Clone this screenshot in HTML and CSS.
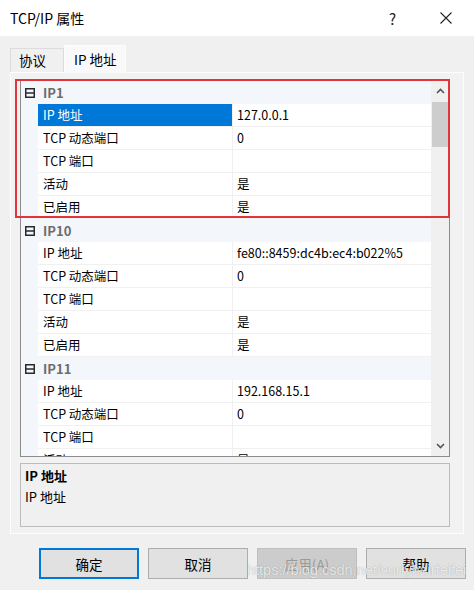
FILE: index.html
```html
<!DOCTYPE html>
<html lang="zh-CN">
<head>
    <meta charset="UTF-8">
    <meta name="viewport" content="width=device-width, initial-scale=1.0">
    <title>TCP/IP 属性</title>
    <link rel="stylesheet" href="styles.css">
</head>
<body>
    <div class="dialog">
        <div class="titlebar">
            <span class="title">TCP/IP 属性</span>
            <div class="title-controls">
                <span class="title-btn help">?</span>
                <span class="title-btn close">
                    <svg width="14" height="14" viewBox="0 0 14 14"><path d="M1.5 1.5 L12.5 12.5 M12.5 1.5 L1.5 12.5" stroke="#222" stroke-width="1.1" fill="none"/></svg>
                </span>
            </div>
        </div>

        <div class="tabs">
            <div class="tab">协议</div>
            <div class="tab active">IP 地址</div>
        </div>

        <div class="tab-panel">
            <div class="grid">
                <div class="grid-body">
                    <div class="row cat">
                        <div class="gutter"><svg class="minus" width="10" height="10" viewBox="0 0 10 10"><rect x="0.75" y="0.75" width="8.5" height="8.5" fill="none" stroke="#2b2b2b" stroke-width="1.5"/><path d="M1 5 H9" stroke="#2b2b2b" stroke-width="1.5"/></svg></div>
                        <div class="label">IP1</div>
                    </div>
                    <div class="row prop"><div class="gutter"></div><div class="name selected">IP 地址</div><div class="value">127.0.0.1</div></div>
                    <div class="row prop"><div class="gutter"></div><div class="name">TCP 动态端口</div><div class="value">0</div></div>
                    <div class="row prop"><div class="gutter"></div><div class="name">TCP 端口</div><div class="value"></div></div>
                    <div class="row prop"><div class="gutter"></div><div class="name">活动</div><div class="value">是</div></div>
                    <div class="row prop"><div class="gutter"></div><div class="name">已启用</div><div class="value">是</div></div>

                    <div class="row cat">
                        <div class="gutter"><svg class="minus" width="10" height="10" viewBox="0 0 10 10"><rect x="0.75" y="0.75" width="8.5" height="8.5" fill="none" stroke="#2b2b2b" stroke-width="1.5"/><path d="M1 5 H9" stroke="#2b2b2b" stroke-width="1.5"/></svg></div>
                        <div class="label">IP10</div>
                    </div>
                    <div class="row prop"><div class="gutter"></div><div class="name">IP 地址</div><div class="value">fe80::8459:dc4b:ec4:b022%5</div></div>
                    <div class="row prop"><div class="gutter"></div><div class="name">TCP 动态端口</div><div class="value">0</div></div>
                    <div class="row prop"><div class="gutter"></div><div class="name">TCP 端口</div><div class="value"></div></div>
                    <div class="row prop"><div class="gutter"></div><div class="name">活动</div><div class="value">是</div></div>
                    <div class="row prop"><div class="gutter"></div><div class="name">已启用</div><div class="value">是</div></div>

                    <div class="row cat">
                        <div class="gutter"><svg class="minus" width="10" height="10" viewBox="0 0 10 10"><rect x="0.75" y="0.75" width="8.5" height="8.5" fill="none" stroke="#2b2b2b" stroke-width="1.5"/><path d="M1 5 H9" stroke="#2b2b2b" stroke-width="1.5"/></svg></div>
                        <div class="label">IP11</div>
                    </div>
                    <div class="row prop"><div class="gutter"></div><div class="name">IP 地址</div><div class="value">192.168.15.1</div></div>
                    <div class="row prop"><div class="gutter"></div><div class="name">TCP 动态端口</div><div class="value">0</div></div>
                    <div class="row prop"><div class="gutter"></div><div class="name">TCP 端口</div><div class="value"></div></div>
                    <div class="row prop"><div class="gutter"></div><div class="name">活动</div><div class="value">是</div></div>
                </div>
                <div class="scrollbar">
                    <div class="arrow"><svg width="9" height="6" viewBox="0 0 9 6"><path d="M1 5 L4.5 1.5 L8 5" stroke="#555" stroke-width="1.6" fill="none"/></svg></div>
                    <div class="thumb"></div>
                    <div class="track"></div>
                    <div class="arrow"><svg width="9" height="6" viewBox="0 0 9 6"><path d="M1 1 L4.5 4.5 L8 1" stroke="#555" stroke-width="1.6" fill="none"/></svg></div>
                </div>
            </div>

            <div class="description">
                <div class="desc-title">IP 地址</div>
                <div class="desc-text">IP 地址</div>
            </div>

            <div class="highlight"></div>
        </div>

        <div class="buttons">
            <button class="btn default">确定</button>
            <button class="btn">取消</button>
            <button class="btn disabled">应用(A)</button>
            <button class="btn">帮助</button>
        </div>

        <div class="watermark">https://blog.csdn.net/curlyhairfeifei</div>
    </div>
</body>
</html>
```

FILE: styles.css
```css
body {
    margin: 0;
    background: #f0f0f0;
    font-family: "Noto Sans CJK SC", "Microsoft YaHei", sans-serif;
    color: #000;
}
.dialog {
    width: 474px;
    height: 590px;
    position: relative;
    overflow: hidden;
    display: flex;
    flex-direction: column;
}
.titlebar {
    height: 36px;
    background: #fff;
    display: flex;
    align-items: center;
    padding-left: 10px;
}
.title {
    font-size: 14px;
}
.title-controls {
    margin-left: auto;
    display: flex;
    padding-right: 2px;
}
.title-btn {
    width: 53px;
    height: 36px;
    display: flex;
    justify-content: center;
    align-items: center;
}
.help {
    font-size: 15px;
    color: #222;
}
.tabs {
    display: flex;
    align-items: flex-end;
    height: 27px;
    margin-top: 9px;
    padding-left: 10px;
}
.tab {
    height: 24px;
    box-sizing: border-box;
    padding: 0 8px;
    width: 54px;
    font-size: 13.5px;
    line-height: 23px;
    border: 1px solid #dcdcdc;
    border-bottom: none;
    background: #f0f0f0;
}
.tab.active {
    width: 62px;
    height: 28px;
    margin-bottom: -1px;
    padding-left: 9px;
    line-height: 26px;
    background: #f9f9f9;
    border-color: #fdfdfd;
    position: relative;
    z-index: 1;
}
.tab-panel {
    width: 454px;
    height: 462px;
    box-sizing: border-box;
    margin-left: 10px;
    border: 1px solid #fdfdfd;
    background: #f2f2f2;
    padding: 7px 9px 6px;
    position: relative;
}
.grid {
    width: 430px;
    height: 377px;
    box-sizing: border-box;
    border: 1px solid #8c8c8c;
    background: #fff;
    display: flex;
    overflow: hidden;
}
.grid-body {
    width: 410px;
    display: flex;
    flex-direction: column;
    font-size: 12.5px;
}
.row {
    display: flex;
    height: 23px;
    flex: none;
}
.gutter {
    width: 17px;
    flex: none;
    background: #f3f6fa;
    display: flex;
    justify-content: center;
    align-items: center;
}
.cat {
    background: #f3f6fa;
}
.cat .label {
    padding-left: 5px;
    line-height: 23px;
    font-weight: bold;
    color: #6d6d6d;
    font-size: 13px;
}
.prop .name {
    width: 195px;
    box-sizing: border-box;
    padding-left: 5px;
    line-height: 22px;
    border-bottom: 1px solid #f0f0f0;
    border-right: 1px solid #f0f0f0;
}
.prop .name.selected {
    background: #0078d7;
    color: #fff;
}
.prop .value {
    flex: 1;
    padding-left: 4px;
    line-height: 22px;
    border-bottom: 1px solid #f0f0f0;
}
.scrollbar {
    width: 18px;
    background: #f0f0f0;
    display: flex;
    flex-direction: column;
}
.arrow {
    height: 20px;
    display: flex;
    justify-content: center;
    align-items: center;
}
.thumb {
    height: 45px;
    margin: 1px 1px 0;
    background: #cdcdcd;
}
.track {
    flex: 1;
}
.description {
    width: 430px;
    height: 64px;
    box-sizing: border-box;
    margin-top: 6px;
    border: 1px solid #bcbcbc;
    background: #f0f0f0;
    padding: 2px 4px;
    font-size: 13px;
}
.desc-title {
    font-weight: bold;
    line-height: 20px;
}
.desc-text {
    line-height: 22px;
}
.highlight {
    position: absolute;
    left: 4px;
    top: 6px;
    width: 435px;
    height: 139px;
    box-sizing: border-box;
    border: 2px solid #e3343b;
    pointer-events: none;
}
.buttons {
    display: flex;
    justify-content: flex-end;
    gap: 9px;
    margin-top: 14px;
    padding-right: 8px;
}
.btn {
    width: 100px;
    height: 31px;
    font-family: "Noto Sans CJK SC", sans-serif;
    font-size: 13.5px;
    background: #e1e1e1;
    border: 1px solid #adadad;
    color: #000;
    padding: 0;
}
.btn.default {
    border: 2px solid #0078d7;
}
.btn.disabled {
    background: #cccccc;
    border-color: #bfbfbf;
    color: #9a9a9a;
}
.watermark {
    position: absolute;
    left: 247px;
    top: 562px;
    font-family: "Liberation Sans", Arial, sans-serif;
    font-size: 14.5px;
    color: rgba(255, 255, 255, 0.8);
    text-shadow: 0 0 1px rgba(0, 0, 0, 0.35);
    white-space: nowrap;
}
```
